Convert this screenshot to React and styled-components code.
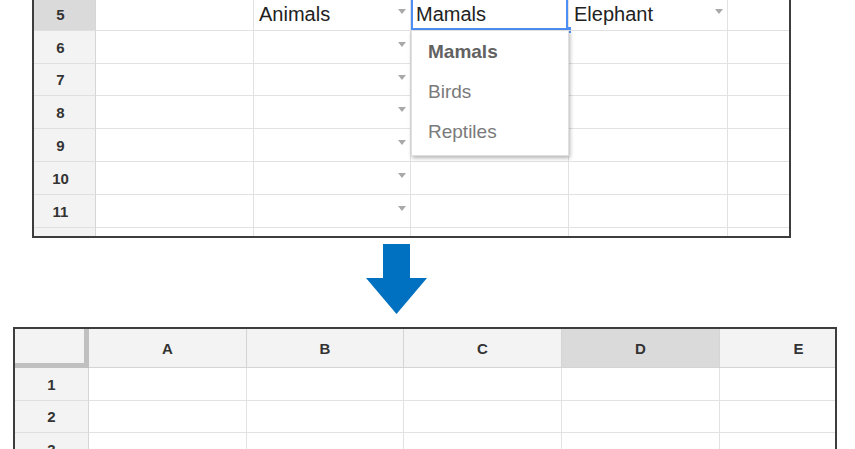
import React from "react";
import styled, { createGlobalStyle } from "styled-components";

const GlobalStyle = createGlobalStyle`
    html, body {
        margin: 0;
        padding: 0;
        background: #ffffff;
    }
    body {
        font-family: "Liberation Sans", Arial, sans-serif;
        overflow: hidden;
    }
`;

const Page = styled.div`
    width: 855px;
    height: 449px;
    display: flex;
    flex-direction: column;
    overflow: hidden;
`;

// ---- top sheet (before) ----
const TopSheet = styled.div`
    margin-left: 32px;
    width: 759px;
    height: 238px;
    box-sizing: border-box;
    border: 2px solid #3d3d3d;
    border-top: none;
    overflow: hidden;
    flex-shrink: 0;
`;

const TopGrid = styled.div`
    margin-top: -2px;
`;

const Row = styled.div`
    display: grid;
    grid-template-columns: ${p => p.$cols};
    height: ${p => p.$h}px;
`;

const RowHead = styled.div`
    box-sizing: border-box;
    display: flex;
    align-items: center;
    justify-content: center;
    padding-right: ${p => p.$shift || 0}px;
    background: ${p => (p.$selected ? "#dadada" : "#f3f3f3")};
    border-right: 1px solid #d6d6d6;
    border-bottom: 1px solid #e0e0e0;
    font-size: 15px;
    font-weight: bold;
    color: #333;
`;

const Cell = styled.div`
    box-sizing: border-box;
    position: relative;
    display: flex;
    align-items: center;
    justify-content: space-between;
    padding: 0 4px 0 5px;
    border-right: 1px solid #e2e2e2;
    border-bottom: 1px solid #e2e2e2;
    font-size: 20px;
    color: #222;
    white-space: nowrap;

    &:last-child {
        border-right: none;
    }
`;

const Caret = styled.span`
    width: 0;
    height: 0;
    margin-left: auto;
    margin-bottom: 5px;
    border-left: 4px solid transparent;
    border-right: 4px solid transparent;
    border-top: 5px solid #a9a9a9;
`;

const Selection = styled.div`
    position: absolute;
    inset: 0;
    border: 2px solid #4d8ef5;
    pointer-events: none;
`;

const Handle = styled.div`
    position: absolute;
    right: -3px;
    bottom: -3px;
    width: 5px;
    height: 6px;
    background: #4d8ef5;
`;

const Menu = styled.div`
    position: absolute;
    top: 100%;
    left: 0;
    width: 158px;
    box-sizing: border-box;
    padding: 1px 0 3px;
    background: #fff;
    border: 1px solid rgba(0, 0, 0, 0.12);
    box-shadow: 1px 2px 4px rgba(0, 0, 0, 0.3);
    z-index: 3;
`;

const MenuItem = styled.div`
    height: 40px;
    display: flex;
    align-items: center;
    padding-left: 16px;
    font-size: 19px;
    font-weight: ${p => (p.$active ? "bold" : "normal")};
    color: ${p => (p.$active ? "#626262" : "#7a7a7a")};
`;

// ---- arrow ----
const ArrowRow = styled.div`
    height: 89px;
    box-sizing: border-box;
    padding: 6px 0 0 366px;
    flex-shrink: 0;
`;

// ---- bottom sheet (after) ----
const BottomSheet = styled.div`
    margin-left: 13px;
    width: 824px;
    flex: 1;
    box-sizing: border-box;
    border: 2px solid #3d3d3d;
    border-bottom: none;
    overflow: hidden;
`;

const Corner = styled.div`
    box-sizing: border-box;
    background: #f3f3f3;
    border-right: 5px solid #c0c0c0;
    border-bottom: 5px solid #c0c0c0;
`;

const ColHead = styled.div`
    box-sizing: border-box;
    display: flex;
    align-items: center;
    justify-content: center;
    background: ${p => (p.$selected ? "#dadada" : "#f3f3f3")};
    border-right: 1px solid #d4d4d4;
    border-bottom: 1px solid #d4d4d4;
    font-size: 15px;
    font-weight: bold;
    color: #333;
`;

const TOP_COLS = "62px 158px 157px 158px 159px 1fr";
const BOTTOM_COLS = "74px 158px 157px 158px 158px 158px";

const topRows = [
    { n: 5, h: 33, b: "Animals", c: "Mamals", d: "Elephant", caret: true },
    { n: 6, h: 33, caret: true },
    { n: 7, h: 32, caret: true },
    { n: 8, h: 33, caret: true },
    { n: 9, h: 33, caret: true },
    { n: 10, h: 33, caret: true },
    { n: 11, h: 33, caret: true },
    { n: 12, h: 33 },
];

const categories = ["Mamals", "Birds", "Reptiles"];
const letters = ["A", "B", "C", "D", "E"];
const bottomRows = [
    { n: 1, h: 33 },
    { n: 2, h: 32 },
    { n: 3, h: 33 },
];

const DownArrow = () => (
    <svg width="61" height="70" viewBox="0 0 61 70">
        <path d="M17 0 H44 V34 H61 L30.5 70 L0 34 H17 Z" fill="#0070c0" />
    </svg>
);

const App = () => {
    return (
        <>
            <GlobalStyle />
            <Page>
                <TopSheet>
                    <TopGrid>
                        {topRows.map(row => (
                            <Row key={row.n} $cols={TOP_COLS} $h={row.h}>
                                <RowHead $selected={row.n === 5} $shift={8}>
                                    {row.n === 12 ? "" : row.n}
                                </RowHead>
                                <Cell />
                                <Cell>
                                    <span>{row.b}</span>
                                    {row.caret && <Caret />}
                                </Cell>
                                <Cell>
                                    <span>{row.c}</span>
                                    {row.c && (
                                        <>
                                            <Selection />
                                            <Handle />
                                            <Menu>
                                                {categories.map((cat, i) => (
                                                    <MenuItem key={cat} $active={i === 0}>
                                                        {cat}
                                                    </MenuItem>
                                                ))}
                                            </Menu>
                                        </>
                                    )}
                                </Cell>
                                <Cell>
                                    <span>{row.d}</span>
                                    {row.d && <Caret />}
                                </Cell>
                                <Cell />
                            </Row>
                        ))}
                    </TopGrid>
                </TopSheet>

                <ArrowRow>
                    <DownArrow />
                </ArrowRow>

                <BottomSheet>
                    <Row $cols={BOTTOM_COLS} $h={39}>
                        <Corner />
                        {letters.map(l => (
                            <ColHead key={l} $selected={l === "D"}>
                                {l}
                            </ColHead>
                        ))}
                    </Row>
                    {bottomRows.map(row => (
                        <Row key={row.n} $cols={BOTTOM_COLS} $h={row.h}>
                            <RowHead>{row.n}</RowHead>
                            {letters.map(l => (
                                <Cell key={l} />
                            ))}
                        </Row>
                    ))}
                </BottomSheet>
            </Page>
        </>
    );
};

export default App;
